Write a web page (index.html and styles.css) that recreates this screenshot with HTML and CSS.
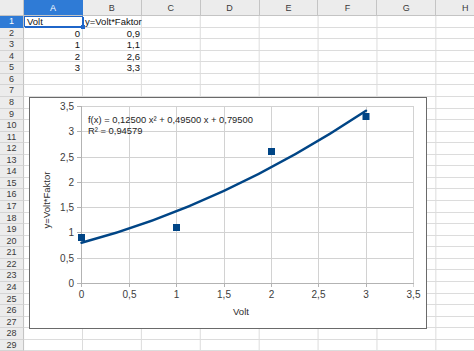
FILE: index.html
```html
<!DOCTYPE html>
<html>
<head>
<meta charset="utf-8">
<link rel="stylesheet" href="styles.css">
</head>
<body>
<div class="sheet">
  <div class="colhead">
    <div class="corner"></div>
    <div class="ch sel">A</div><div class="ch">B</div><div class="ch">C</div><div class="ch">D</div>
    <div class="ch">E</div><div class="ch">F</div><div class="ch">G</div><div class="ch">H</div>
  </div>
  <div class="row"><div class="rh sel">1</div><div class="cells"><div class="c a left cursor">Volt</div><div class="c b left">y=Volt*Faktor</div></div></div>
  <div class="row"><div class="rh">2</div><div class="cells"><div class="c a">0</div><div class="c b">0,9</div></div></div>
  <div class="row"><div class="rh">3</div><div class="cells"><div class="c a">1</div><div class="c b">1,1</div></div></div>
  <div class="row"><div class="rh">4</div><div class="cells"><div class="c a">2</div><div class="c b">2,6</div></div></div>
  <div class="row"><div class="rh">5</div><div class="cells"><div class="c a">3</div><div class="c b">3,3</div></div></div>
  <div class="row"><div class="rh">6</div><div class="cells"></div></div>
  <div class="row"><div class="rh">7</div><div class="cells"></div></div>
  <div class="row"><div class="rh">8</div><div class="cells"></div></div>
  <div class="row"><div class="rh">9</div><div class="cells"></div></div>
  <div class="row"><div class="rh">10</div><div class="cells"></div></div>
  <div class="row"><div class="rh">11</div><div class="cells"></div></div>
  <div class="row"><div class="rh">12</div><div class="cells"></div></div>
  <div class="row"><div class="rh">13</div><div class="cells"></div></div>
  <div class="row"><div class="rh">14</div><div class="cells"></div></div>
  <div class="row"><div class="rh">15</div><div class="cells"></div></div>
  <div class="row"><div class="rh">16</div><div class="cells"></div></div>
  <div class="row"><div class="rh">17</div><div class="cells"></div></div>
  <div class="row"><div class="rh">18</div><div class="cells"></div></div>
  <div class="row"><div class="rh">19</div><div class="cells"></div></div>
  <div class="row"><div class="rh">20</div><div class="cells"></div></div>
  <div class="row"><div class="rh">21</div><div class="cells"></div></div>
  <div class="row"><div class="rh">22</div><div class="cells"></div></div>
  <div class="row"><div class="rh">23</div><div class="cells"></div></div>
  <div class="row"><div class="rh">24</div><div class="cells"></div></div>
  <div class="row"><div class="rh">25</div><div class="cells"></div></div>
  <div class="row"><div class="rh">26</div><div class="cells"></div></div>
  <div class="row"><div class="rh">27</div><div class="cells"></div></div>
  <div class="row"><div class="rh">28</div><div class="cells"></div></div>
  <div class="row"><div class="rh">29</div><div class="cells"></div></div>

  <div class="chart">
    <svg class="plot" width="396" height="230" viewBox="30 98 396 230" xmlns="http://www.w3.org/2000/svg">
      <g class="grid" stroke="#d2d2d2" stroke-width="1">
        <line x1="129.5" y1="106" x2="129.5" y2="283"/>
        <line x1="176.5" y1="106" x2="176.5" y2="283"/>
        <line x1="224.5" y1="106" x2="224.5" y2="283"/>
        <line x1="271.5" y1="106" x2="271.5" y2="283"/>
        <line x1="318.5" y1="106" x2="318.5" y2="283"/>
        <line x1="366.5" y1="106" x2="366.5" y2="283"/>
        <line x1="413.5" y1="106" x2="413.5" y2="287"/>
        <line x1="81" y1="106.5" x2="414" y2="106.5"/>
        <line x1="81" y1="131.5" x2="414" y2="131.5"/>
        <line x1="81" y1="157.5" x2="414" y2="157.5"/>
        <line x1="81" y1="182.5" x2="414" y2="182.5"/>
        <line x1="81" y1="207.5" x2="414" y2="207.5"/>
        <line x1="81" y1="232.5" x2="414" y2="232.5"/>
        <line x1="81" y1="258.5" x2="414" y2="258.5"/>
      </g>
      <g class="axes" stroke="#b3b3b3" stroke-width="1">
        <line x1="81.5" y1="106" x2="81.5" y2="287"/>
        <line x1="77" y1="283.5" x2="414" y2="283.5"/>
        <line x1="77" y1="106.5" x2="81" y2="106.5"/>
        <line x1="77" y1="131.5" x2="81" y2="131.5"/>
        <line x1="77" y1="157.5" x2="81" y2="157.5"/>
        <line x1="77" y1="182.5" x2="81" y2="182.5"/>
        <line x1="77" y1="207.5" x2="81" y2="207.5"/>
        <line x1="77" y1="232.5" x2="81" y2="232.5"/>
        <line x1="77" y1="258.5" x2="81" y2="258.5"/>
        <line x1="129.5" y1="284" x2="129.5" y2="287"/>
        <line x1="176.5" y1="284" x2="176.5" y2="287"/>
        <line x1="224.5" y1="284" x2="224.5" y2="287"/>
        <line x1="271.5" y1="284" x2="271.5" y2="287"/>
        <line x1="318.5" y1="284" x2="318.5" y2="287"/>
        <line x1="366.5" y1="284" x2="366.5" y2="287"/>
      </g>
      <g class="ylabels" text-anchor="end">
        <text x="74" y="110">3,5</text>
        <text x="74" y="135">3</text>
        <text x="74" y="161">2,5</text>
        <text x="74" y="186">2</text>
        <text x="74" y="211">1,5</text>
        <text x="74" y="236">1</text>
        <text x="74" y="262">0,5</text>
        <text x="74" y="287">0</text>
      </g>
      <g class="xlabels" text-anchor="middle">
        <text x="81.5" y="298">0</text>
        <text x="129.5" y="298">0,5</text>
        <text x="176.5" y="298">1</text>
        <text x="224" y="298">1,5</text>
        <text x="271.5" y="298">2</text>
        <text x="318.5" y="298">2,5</text>
        <text x="366" y="298">3</text>
        <text x="413.5" y="298">3,5</text>
      </g>
      <text class="title" x="241" y="315" text-anchor="middle">Volt</text>
      <text class="title" transform="translate(49.5 200) rotate(-90)" text-anchor="middle">y=Volt*Faktor</text>
      <text class="eq" x="88" y="123.3">f(x) = 0,12500 x² + 0,49500 x + 0,79500</text>
      <text class="eq" x="88" y="134">R² = 0,94579</text>
      <g class="points" fill="#004586">
        <rect x="78" y="234" width="7" height="7"/>
        <rect x="173" y="224" width="7" height="7"/>
        <rect x="268" y="148" width="7" height="7"/>
        <rect x="362.5" y="113" width="7" height="7"/>
      </g>
      <path d="M81.5 242.8 Q223.7 205.25 366 110.8" fill="none" stroke="#004586" stroke-width="2.5" stroke-linecap="round"/>
    </svg>
  </div>
</div>
</body>
</html>
```

FILE: styles.css
```css
html, body {
  margin: 0;
  padding: 0;
  background: #ffffff;
}

body {
  font-family: "Liberation Sans", Arial, sans-serif;
  width: 474px;
  height: 351px;
  overflow: hidden;
}

.sheet {
  position: relative;
  width: 474px;
  height: 351px;
  overflow: hidden;
}

.colhead {
  display: flex;
  height: 16px;
  background: #ececec;
}

.corner {
  flex: 0 0 24px;
  box-sizing: border-box;
  border-right: 1px solid #c4c4c4;
  border-bottom: 1px solid #c4c4c4;
}

.ch {
  flex: 0 0 58.9px;
  box-sizing: border-box;
  border-right: 1px solid #c4c4c4;
  border-bottom: 1px solid #c4c4c4;
  font-size: 9px;
  line-height: 16px;
  text-align: center;
  color: #3a3a3a;
}

.ch.sel {
  background: #2f7bd6;
  color: #ffffff;
  border-right-color: #2f7bd6;
}

.row {
  display: flex;
  height: 11.57px;
}

.rh {
  flex: 0 0 24px;
  box-sizing: border-box;
  background: #ececec;
  border-right: 1px solid #c4c4c4;
  border-bottom: 1px solid #d4d4d4;
  font-size: 9px;
  line-height: 11px;
  text-align: center;
  color: #3a3a3a;
}

.rh.sel {
  background: #2f7bd6;
  color: #ffffff;
  border-bottom-color: #2f7bd6;
}

.cells {
  flex: 1;
  display: flex;
  box-sizing: border-box;
  border-bottom: 1px solid #dcdcdc;
  background-image: linear-gradient(to right, #dcdcdc 1px, transparent 1px);
  background-size: 58.9px 100%;
  background-position: 58px 0;
}

.c {
  box-sizing: border-box;
  font-size: 9.5px;
  line-height: 11px;
  color: #111111;
  text-align: right;
  padding: 0 3px;
  white-space: nowrap;
}

.c.a {
  flex: 0 0 59px;
}

.c.b {
  flex: 0 0 60px;
}

.c.left {
  text-align: left;
  padding: 0 2px;
}

.cursor {
  position: relative;
  border: 1px solid #1f66c9;
  box-shadow: 1px 1px 0 #1f66c9;
  line-height: 9px;
  padding-left: 1px;
  background: #ffffff;
}

.cursor::after {
  content: "";
  position: absolute;
  right: -3px;
  bottom: -3px;
  width: 4px;
  height: 4px;
  background: #1f66c9;
}

.chart {
  position: absolute;
  left: 29px;
  top: 97px;
  width: 398px;
  height: 232px;
  box-sizing: border-box;
  border: 1px solid #6a6a6a;
  background: #ffffff;
}

.plot {
  display: block;
  font-family: "Liberation Sans", Arial, sans-serif;
}

.ylabels text,
.xlabels text {
  font-size: 10px;
  fill: #3c3c3c;
}

.title {
  font-size: 9.5px;
  fill: #2c2c2c;
}

.eq {
  font-size: 9.4px;
  fill: #1e1e1e;
}
```
